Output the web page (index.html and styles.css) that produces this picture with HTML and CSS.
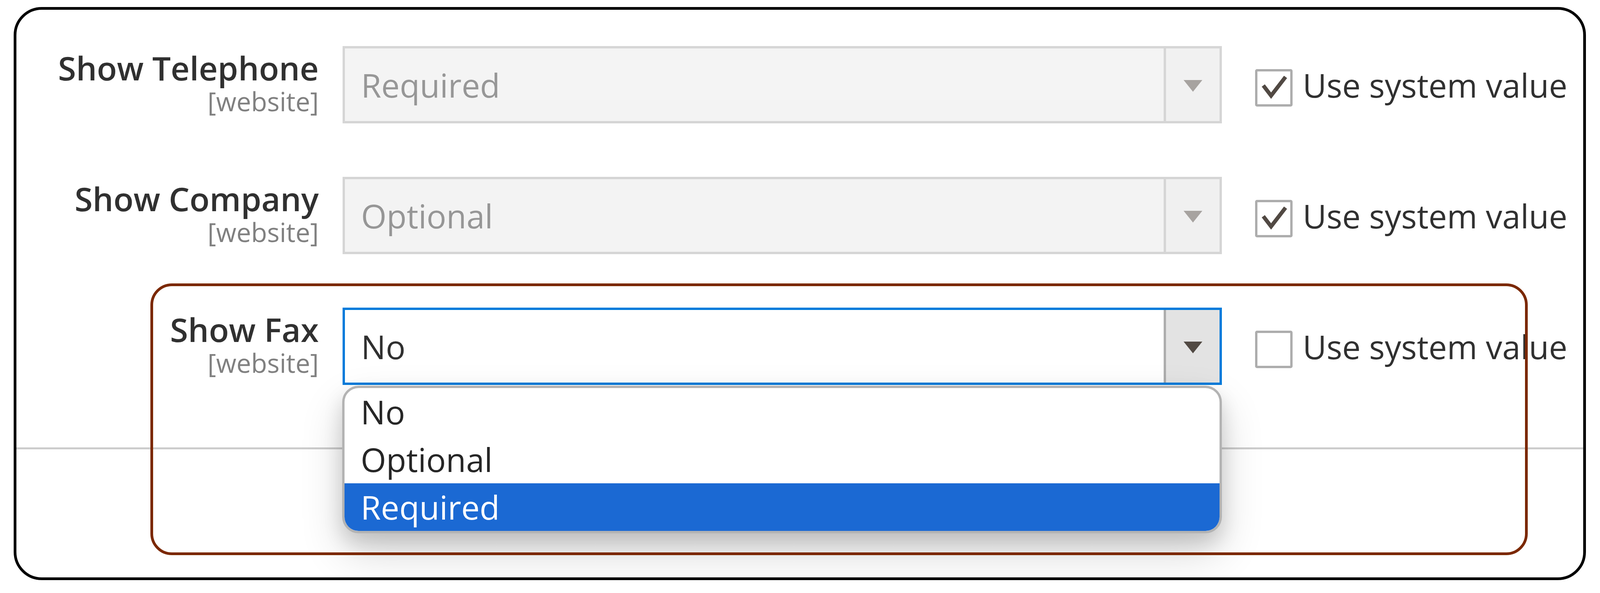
FILE: index.html
```html
<!DOCTYPE html>
<html lang="en">
<head>
<meta charset="utf-8">
<title>Show Fax configuration</title>
<link rel="stylesheet" href="styles.css">
</head>
<body>
<div class="frame">
  <div class="fieldset">
    <div class="row">
      <div class="label"><span class="title">Show Telephone</span><span class="scope">[website]</span></div>
      <div class="control">
        <div class="select disabled"><span class="value">Required</span><span class="arrow"></span></div>
      </div>
      <div class="use-default">
        <span class="checkbox"><svg class="check" viewBox="0 0 84 84"><polyline points="15,36 35,62 72,14"/></svg></span>
        <span class="cb-text">Use system value</span>
      </div>
    </div>
    <div class="row">
      <div class="label"><span class="title">Show Company</span><span class="scope">[website]</span></div>
      <div class="control">
        <div class="select disabled"><span class="value">Optional</span><span class="arrow"></span></div>
      </div>
      <div class="use-default">
        <span class="checkbox"><svg class="check" viewBox="0 0 84 84"><polyline points="15,36 35,62 72,14"/></svg></span>
        <span class="cb-text">Use system value</span>
      </div>
    </div>
    <div class="row">
      <div class="label"><span class="title">Show Fax</span><span class="scope">[website]</span></div>
      <div class="control">
        <div class="select focused"><span class="value">No</span><span class="arrow"></span></div>
        <ul class="popup">
          <li>No</li>
          <li>Optional</li>
          <li class="selected">Required</li>
        </ul>
      </div>
      <div class="use-default">
        <span class="checkbox"></span>
        <span class="cb-text">Use system value</span>
      </div>
    </div>
  </div>
  <div class="divider"></div>
  <div class="highlight"></div>
</div>
</body>
</html>
```
FILE: styles.css
```css
html, body {
  margin: 0;
  padding: 0;
  background: #ffffff;
  overflow: hidden;
}

body {
  font-family: "Open Sans", "Noto Sans", sans-serif;
  color: #303030;
}

/* outer rounded frame */
.frame {
  position: relative;
  box-sizing: border-box;
  height: 1468px;
  margin: 18px 0.871vw 0 0.854vw;
  border: 7px solid #000000;
  border-radius: 72px;
  overflow: hidden;
  background: #ffffff;
}

.fieldset {
  display: flex;
  flex-direction: column;
  gap: 137px;
  padding-top: 93px;
}

.row {
  display: flex;
  align-items: flex-start;
  height: 198px;
  padding-right: 1vw;
}

/* label column */
.label {
  flex: none;
  width: calc(19.069vw - 7px);
  padding-top: 6px;
  display: flex;
  flex-direction: column;
  align-items: flex-end;
  text-align: right;
}

.title {
  font-size: 84px;
  font-weight: 600;
  line-height: 100px;
  color: #303030;
  white-space: nowrap;
}

.scope {
  font-size: 67px;
  line-height: 71px;
  color: #808080;
}

/* select control */
.control {
  position: relative;
  flex: 0 1 56.756vw;
  min-width: 0;
  margin-left: 1.49vw;
}

.select {
  box-sizing: border-box;
  display: flex;
  height: 198px;
  border: 6px solid #adadad;
  background: #ffffff;
}

.select .value {
  flex: 1;
  display: flex;
  align-items: center;
  padding-left: 1.005vw;
  font-size: 84px;
  color: #303030;
  white-space: nowrap;
}

.select .arrow {
  flex: none;
  width: 3.348vw;
  border-left: 6px solid #adadad;
  background: #e3e3e3;
  display: flex;
  align-items: center;
  justify-content: center;
}

.select .arrow::after {
  content: "";
  width: 0;
  height: 0;
  margin-top: 6px;
  border-style: solid;
  border-width: 30px 24px 0 24px;
  border-color: #514943 transparent transparent transparent;
}

.select.disabled {
  background: #e9e9e9;
  opacity: 0.5;
}

.select.focused {
  border-color: #007bdb;
}

/* open option list */
.popup {
  position: absolute;
  z-index: 2;
  top: calc(100% + 2px);
  left: -1px;
  right: 0;
  margin: 0;
  padding: 0;
  list-style: none;
  background: #ffffff;
  border: 6px solid #b3b3b3;
  border-radius: 42px;
  overflow: hidden;
  box-shadow: 0 24px 50px rgba(0, 0, 0, 0.14), 0 50px 110px rgba(0, 0, 0, 0.16);
}

.popup li {
  height: 122px;
  line-height: 122px;
  padding-left: 1.005vw;
  font-size: 84px;
  color: #262626;
  white-space: nowrap;
}

.popup li.selected {
  background: #1b69d3;
  color: #ffffff;
}

/* use system value */
.use-default {
  flex: none;
  display: flex;
  align-items: center;
  height: 198px;
  margin-left: 2.059vw;
}

.checkbox {
  box-sizing: border-box;
  flex: none;
  width: 96px;
  height: 96px;
  margin-top: 16px;
  border: 6px solid #adadad;
  border-radius: 5px;
  background: #ffffff;
}

.check {
  display: block;
  width: 84px;
  height: 84px;
}

.check polyline {
  fill: none;
  stroke: #514943;
  stroke-width: 10;
  stroke-linejoin: miter;
  stroke-linecap: butt;
}

.cb-text {
  margin-left: 0.636vw;
  font-size: 84px;
  color: #303030;
  white-space: nowrap;
}

.divider {
  margin-top: 160px;
  height: 5px;
  background: #cccccc;
}

/* annotation box around the Show Fax row */
.highlight {
  position: absolute;
  z-index: 3;
  left: calc(8.555vw - 7px);
  right: calc(3.649vw - 7px);
  top: 701px;
  height: 696px;
  box-sizing: border-box;
  border: 7px solid #7b2800;
  border-radius: 55px;
  pointer-events: none;
}
```
